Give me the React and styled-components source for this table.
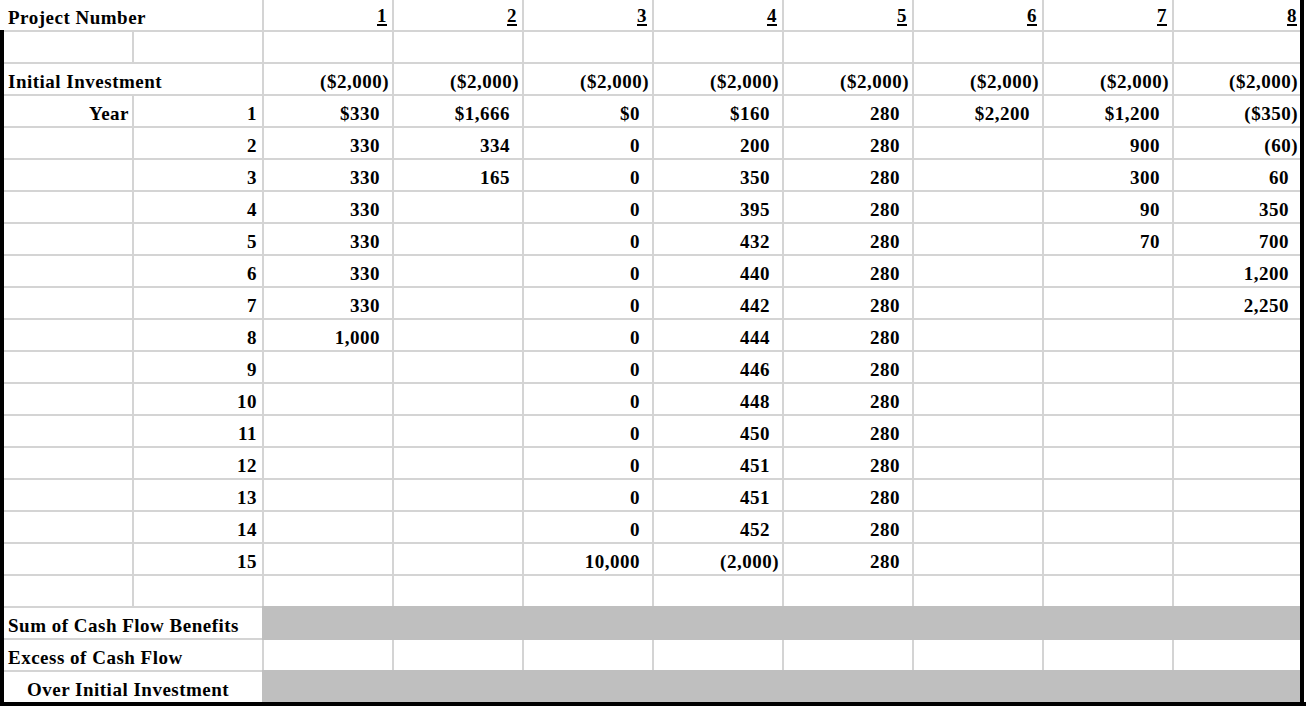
import React from 'react';
import styled, { createGlobalStyle } from 'styled-components';

const GlobalStyle = createGlobalStyle`
  html, body {
    margin: 0;
    padding: 0;
    background: #fff;
  }
  body {
    font-family: "Liberation Serif", "Times New Roman", serif;
    color: #000;
  }
`;

const Page = styled.div`
  width: 1306px;
  height: 706px;
  box-sizing: border-box;
  border-bottom: 4px solid #000;
  overflow: hidden;
`;

// the black rule on the left starts under the first row
const Sheet = styled.div`
  width: 1304px;
  box-sizing: border-box;
  padding-left: 4px;
  border-right: 4px solid #000;
  background: linear-gradient(#fff 0 30px, #000 30px) left top / 4px 100% no-repeat;
`;

const Grid = styled.div`
  display: grid;
  grid-template-columns: repeat(9, 128px) 126px;
  grid-auto-rows: 30px;
  gap: 2px;
  background: #d4d4d4;
`;

const Cell = styled.div`
  grid-column: span ${(p) => p.$span || 1};
  background: #fff;
  display: flex;
  align-items: flex-end;
  justify-content: flex-end;
  box-sizing: border-box;
  padding: 0 ${(p) => (p.$last ? 2 : 3)}px 3px 4px;
  font-size: 19px;
  line-height: 19px;
  font-weight: bold;
  letter-spacing: 0.5px;
  white-space: nowrap;
  overflow: hidden;
`;

const Label = styled(Cell)`
  justify-content: ${(p) => (p.$right ? 'flex-end' : 'flex-start')};
  padding-left: ${(p) => p.$indent || 4}px;
`;

const YearNo = styled(Cell)`
  padding-right: 5px;
`;

const HeaderNo = styled(Cell)`
  padding-right: ${(p) => (p.$last ? 3 : 5)}px;
  padding-bottom: 5px;

  span {
    text-decoration: underline;
    text-decoration-thickness: 2px;
    text-underline-offset: 2px;
  }
`;

const Value = styled(Cell)`
  padding-right: ${(p) => (p.$last ? 2 : 3) + (p.$positive ? 9 : 0)}px;
`;

const TotalBar = styled.div`
  grid-column: 3 / span 8;
  background: #bfbfbf;
  margin: -2px 0 ${(p) => (p.$closed ? 0 : -2)}px -2px;
`;

const projects = [
  ['$330', '330', '330', '330', '330', '330', '330', '1,000'],
  ['$1,666', '334', '165'],
  ['$0', '0', '0', '0', '0', '0', '0', '0', '0', '0', '0', '0', '0', '0', '10,000'],
  ['$160', '200', '350', '395', '432', '440', '442', '444', '446', '448', '450', '451', '451', '452', '(2,000)'],
  ['280', '280', '280', '280', '280', '280', '280', '280', '280', '280', '280', '280', '280', '280', '280'],
  ['$2,200'],
  ['$1,200', '900', '300', '90', '70'],
  ['($350)', '(60)', '60', '350', '700', '1,200', '2,250'],
];

const years = Array.from({ length: 15 }, (_, i) => i + 1);

const Amount = ({ text, last }) => (
  <Value $last={last} $positive={!!text && !text.startsWith('(')}>
    {text}
  </Value>
);

const Blank = () => (
  <>
    {Array.from({ length: 10 }, (_, i) => (
      <Cell key={i} $last={i === 9} />
    ))}
  </>
);

export default function App() {
  return (
    <>
      <GlobalStyle />
      <Page>
        <Sheet>
          <Grid>
            <Label $span={2}>Project Number</Label>
            {projects.map((_, i) => (
              <HeaderNo key={i} $last={i === 7}>
                <span>{i + 1}</span>
              </HeaderNo>
            ))}

            <Blank />

            <Label $span={2}>Initial Investment</Label>
            {projects.map((_, i) => (
              <Amount key={i} text="($2,000)" last={i === 7} />
            ))}

            {years.map((year) => (
              <React.Fragment key={year}>
                <Label $right>{year === 1 ? 'Year' : ''}</Label>
                <YearNo>{year}</YearNo>
                {projects.map((flows, i) => (
                  <Amount key={i} text={flows[year - 1]} last={i === 7} />
                ))}
              </React.Fragment>
            ))}

            <Blank />

            <Label $span={2}>Sum of Cash Flow Benefits</Label>
            <TotalBar />

            <Label $span={2}>Excess of Cash Flow</Label>
            {projects.map((_, i) => (
              <Cell key={i} $last={i === 7} />
            ))}

            <Label $span={2} $indent={23}>Over Initial Investment</Label>
            <TotalBar $closed />
          </Grid>
        </Sheet>
      </Page>
    </>
  );
}
